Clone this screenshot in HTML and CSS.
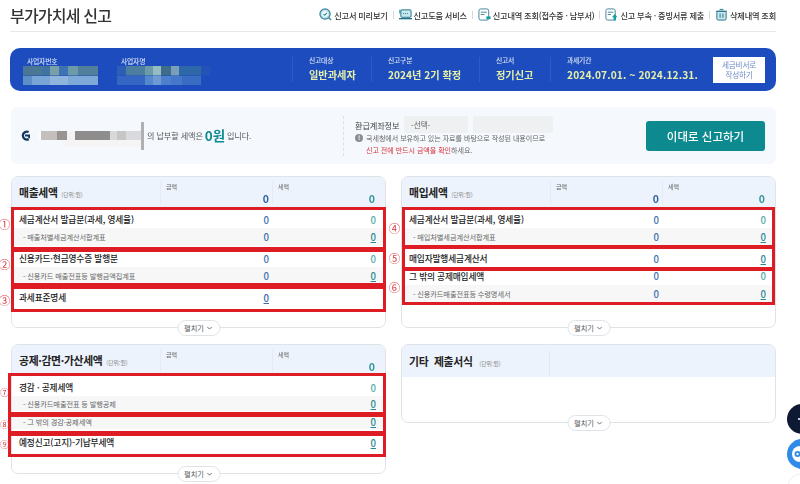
FILE: index.html
```html
<!DOCTYPE html>
<html lang="ko">
<head>
<meta charset="utf-8">
<title>부가가치세 신고</title>
<link rel="stylesheet" href="styles.css">
</head>
<body>
<div class="page">
  <header class="top">
    <h1>부가가치세 신고</h1>
    <nav class="links">
      <a><svg class="ico" viewBox="0 0 14 14"><circle cx="6.5" cy="6.5" r="5.5" fill="#bfe3ea" stroke="#3a7f9a" stroke-width="1.3"/><circle cx="6.5" cy="6.5" r="3" fill="#fff"/><path d="M4.8 6.5l1.4 1.4 2.2-2.6" fill="none" stroke="#0f8a92" stroke-width="1.1"/><path d="M10.5 10.5l2.5 2.5" stroke="#3a7f9a" stroke-width="1.4"/></svg>신고서 미리보기</a>
      <i></i>
      <a><svg class="ico" viewBox="0 0 14 14"><rect x="2" y="2" width="11" height="8" rx="1" fill="#c9e8ee" stroke="#1d6e86"/><path d="M4.5 6h6" stroke="#1d6e86" stroke-dasharray="1 1"/><path d="M0 11.5h14" stroke="#1d6e86" stroke-width="1.4"/><path d="M1 2v4" stroke="#12a0a6" stroke-width="1.4"/></svg>신고도움 서비스</a>
      <i></i>
      <a><svg class="ico" viewBox="0 0 14 14"><rect x="1" y="1" width="10.5" height="12" rx="2" fill="#fff" stroke="#3d7f95"/><path d="M3 4.5h6.5M3 7h4" stroke="#3d7f95"/><path d="M9 9h4.5v3l-4.5 0z" fill="#12a0a6"/></svg>신고내역 조회(접수증 · 납부서)</a>
      <i></i>
      <a><svg class="ico" viewBox="0 0 14 14"><rect x="1" y="1" width="10" height="12" rx="2" fill="#fff" stroke="#3d7f95"/><path d="M3 4.5h6M3 7h3.5" stroke="#3d7f95"/><path d="M10.5 6.5l3 3.5h-1.7v3.5H9.2V10H7.5z" fill="#12a0a6"/></svg>신고 부속 · 증빙서류 제출</a>
      <i></i>
      <a><svg class="ico" viewBox="0 0 14 14"><rect x="2" y="3.5" width="10" height="9.5" rx="1.5" fill="#c9e8ee" stroke="#1d6e86"/><path d="M1 3.5h12M5 1.5h4M5.5 6v4.5M8.5 6v4.5" stroke="#1d6e86"/></svg>삭제내역 조회</a>
    </nav>
  </header>

  <section class="banner">
    <div class="who">
      <div class="who-col w-num"><span class="lab">사업자번호</span><div class="mosaic mo-num"></div></div>
      <div class="who-col"><span class="lab">사업자명</span><div class="mosaic mo-name"></div></div>
    </div>
    <div class="fact f1"><span class="lab">신고대상</span><b>일반과세자</b></div>
    <div class="fact f2"><span class="lab">신고구분</span><b>2024년 2기 확정</b></div>
    <div class="fact f3"><span class="lab">신고서</span><b>정기신고</b></div>
    <div class="fact f4"><span class="lab">과세기간</span><b>2024.07.01. ~ 2024.12.31.</b></div>
    <button class="secretary">세금비서로<br>작성하기</button>
  </section>

  <section class="summary">
    <div class="pay">
      <svg class="logo" viewBox="0 0 10 12"><path d="M8.5 2.2A4.4 4.4 0 1 0 8.5 10" fill="none" stroke="#12365f" stroke-width="2.6"/><path d="M4.5 6H9v3" fill="none" stroke="#12365f" stroke-width="2"/></svg>
      <div class="mosaic mo-pay"></div>
      <p>의 납부할 세액은 <strong>0원</strong> 입니다.</p>
    </div>
    <div class="refund">
      <div class="refund-top">
        <span class="refund-lab">환급계좌정보</span>
        <span class="field f-select">-선택-</span>
        <span class="field f-input"></span>
      </div>
      <p class="note"><span class="bang">!</span>국세청에서 보유하고 있는 자료를 바탕으로 작성된 내용이므로</p>
      <p class="note note2"><em>신고 전에 반드시 금액을 확인</em>하세요.</p>
    </div>
    <button class="submit">이대로 신고하기</button>
  </section>

  <main class="cards">
    <article class="card c-a">
      <div class="head">
        <h2>매출세액 <small>(단위:원)</small></h2>
        <div class="hc"><span>금액</span><b class="blue">0</b></div>
        <div class="hc hc2"><span>세액</span><b class="teal">0</b></div>
      </div>
      <div class="row r-top"><h3>세금계산서 발급분(과세, 영세율)</h3><b class="blue">0</b><b class="teal">0</b></div>
      <div class="row sub"><span>- 매출처별세금계산서합계표</span><b class="blue">0</b><u class="teal">0</u></div>
      <div class="row r-gap"><h3>신용카드·현금영수증 발행분</h3><b class="blue">0</b><b class="teal">0</b></div>
      <div class="row sub"><span>- 신용카드 매출전표등 발행금액집계표</span><b class="blue">0</b><u class="teal">0</u></div>
      <div class="row r-a5"><h3>과세표준명세</h3><u class="blue">0</u><b></b></div>
      <button class="toggle">펼치기 <svg viewBox="0 0 8 5"><path d="M1 1l3 3 3-3" fill="none" stroke="#555" stroke-width="1.1"/></svg></button>
      <div class="mark m1"></div><div class="mark m2"></div><div class="mark m3"></div>
    </article>

    <article class="card c-b">
      <div class="head">
        <h2>매입세액 <small>(단위:원)</small></h2>
        <div class="hc"><span>금액</span><b class="blue">0</b></div>
        <div class="hc hc2"><span>세액</span><b class="teal">0</b></div>
      </div>
      <div class="row r-top"><h3>세금계산서 발급분(과세, 영세율)</h3><b class="blue">0</b><b class="teal">0</b></div>
      <div class="row sub"><span>- 매입처별세금계산서합계표</span><b class="blue">0</b><u class="teal">0</u></div>
      <div class="row r-gap"><h3>매입자발행세금계산서</h3><b class="blue">0</b><u class="teal">0</u></div>
      <div class="row"><h3>그 밖의 공제매입세액</h3><b class="blue">0</b><b class="teal">0</b></div>
      <div class="row sub"><span>- 신용카드매출전표등 수령명세서</span><b class="blue">0</b><u class="teal">0</u></div>
      <button class="toggle">펼치기 <svg viewBox="0 0 8 5"><path d="M1 1l3 3 3-3" fill="none" stroke="#555" stroke-width="1.1"/></svg></button>
      <div class="mark m4"></div><div class="mark m5"></div><div class="mark m6"></div>
    </article>

    <article class="card c-c">
      <div class="head head-c">
        <h2>공제·감면·가산세액 <small>(단위:원)</small></h2>
        <div class="hc"><span>금액</span></div>
        <div class="hc hc2"><span>세액</span><b class="teal">0</b></div>
      </div>
      <div class="row r-c1"><h3>경감 · 공제세액</h3><b></b><b class="teal">0</b></div>
      <div class="row sub r-c2"><span>- 신용카드매출전표 등 발행공제</span><b></b><u class="teal">0</u></div>
      <div class="row sub r-c2 r-c3"><span>- 그 밖의 경감·공제세액</span><b></b><u class="teal">0</u></div>
      <div class="row r-c4"><h3>예정신고(고지)-기납부세액</h3><b></b><u class="teal">0</u></div>
      <button class="toggle">펼치기 <svg viewBox="0 0 8 5"><path d="M1 1l3 3 3-3" fill="none" stroke="#555" stroke-width="1.1"/></svg></button>
      <div class="mark m7"></div><div class="mark m8"></div><div class="mark m9"></div>
    </article>

    <article class="card c-d">
      <div class="head head-d">
        <h2>기타 제출서식 <small>(단위:원)</small></h2>
      </div>
      <button class="toggle">펼치기 <svg viewBox="0 0 8 5"><path d="M1 1l3 3 3-3" fill="none" stroke="#555" stroke-width="1.1"/></svg></button>
    </article>
  </main>

  <span class="num n1">①</span><span class="num n2">②</span><span class="num n3">③</span>
  <span class="num n4">④</span><span class="num n5">⑤</span><span class="num n6">⑥</span>
  <span class="num n7">⑦</span><span class="num n8">⑧</span><span class="num n9">⑨</span>

  <div class="fab fab-dark"><svg viewBox="0 0 30 30"><path d="M11 15h5" stroke="#fff" stroke-width="1.6"/></svg></div>
  <div class="fab fab-blue"><svg viewBox="0 0 30 30"><path d="M5 15a8 8 0 0 1 8-8h6a8 8 0 0 1 8 8v8H13a8 8 0 0 1-8-8z" fill="#fff"/><circle cx="10.5" cy="15" r="3" fill="#2f8ae8"/><circle cx="10.5" cy="15" r="1.2" fill="#fff"/></svg></div>
  <div class="fab fab-pale"></div>
</div>
</body>
</html>
```
FILE: styles.css
```css
* { box-sizing: border-box; }
html, body { margin: 0; padding: 0; }
body {
  background: #fff;
  color: #222;
  font-family: "Noto Sans CJK KR", "Noto Sans", sans-serif;
  overflow: hidden;
}
p, h1, h2, h3 { margin: 0; }
button { font-family: inherit; border: 0; padding: 0; }
.page {
  position: relative;
  width: 800px;
  height: 484px;
  padding: 0 24px 0 10px;
  overflow: hidden;
  filter: blur(.3px);
}

/* header */
.top {
  height: 32px;
  display: flex;
  justify-content: space-between;
  align-items: center;
  border-bottom: 1px solid #e6e8ec;
  padding-bottom: 2px;
}
h1 { font-size: 16px; font-weight: 500; color: #333; letter-spacing: -.8px; line-height: 1; }
.links { display: flex; align-items: center; font-size: 8.2px; font-weight: 500; color: #333; letter-spacing: -.22px; white-space: nowrap; }
.links a { display: flex; align-items: center; gap: 2px; }
.links i { width: 1px; height: 8px; background: #d5d8dd; margin: 0 5px; }
.ico { width: 13px; height: 13px; flex: none; }

/* banner */
.banner {
  margin-top: 16px;
  height: 43px;
  background: #1c4cbd;
  border-radius: 10px;
  display: flex;
  align-items: center;
  color: #d7e3f5;
}
.lab { display: block; font-size: 6.8px; line-height: 9px; color: #d9e3f4; font-weight: 500; letter-spacing: -.2px; }
.who { display: flex; width: 282px; padding: 3px 0 0 13px; }
.who-col { display: flex; flex-direction: column; }
.who-col .lab { padding-left: 4px; }
.w-num { width: 94px; }
.mosaic { background-repeat: no-repeat; }
.mo-num {
  width: 75px; height: 19px;
  background-image:
    linear-gradient(90deg, #4a7894 0 26%, #3f74a0 26% 36%, #77a0a8 36% 48%, #3f74b4 48% 60%, #6d9aa8 60% 74%, #52809c 74%),
    linear-gradient(90deg, #5d8fc6 0 12%, #79a5d6 12% 36%, #8fb5dc 36% 60%, #7ea8d8 60%);
  background-size: 100% 50%, 100% 50%;
  background-position: top, bottom;
}
.mo-name {
  width: 93px; height: 19px;
  background-image:
    linear-gradient(90deg, #2c5eb8 0 10%, #4c7ea0 10% 30%, #6c9aa8 30% 39%, #93bcc4 39% 47%, #3f6c8c 47% 58%, #7a9fb8 58% 67%, #2f68a8 67% 90%, #2453b8 90%),
    linear-gradient(90deg, #3566c4 0 30%, #5588cc 30% 39%, #6f9ad4 39% 47%, #4c80cc 47% 58%, #4578c8 58% 70%, #3a6cc4 70% 90%, #1c4cbd 90%);
  background-size: 100% 50%, 100% 50%;
  background-position: top, bottom;
}
.fact { height: 25px; display: flex; flex-direction: column; justify-content: center; border-left: 1px solid #2c5cc6; padding-left: 16px; }
.fact b { font-size: 10.2px; line-height: 17px; margin-top: 1px; font-weight: 700; color: #e6f0a8; white-space: nowrap; }
.f1 { width: 79px; }
.f2 { width: 108px; }
.f3 { width: 71px; }
.f4 { width: 163px; }
.f4 b { letter-spacing: .12px; }
.secretary {
  width: 52px; height: 26px;
  background: #fff;
  color: #6f8bc6;
  font-size: 7.6px;
  line-height: 10px;
  letter-spacing: -.2px;
}

/* summary */
.summary {
  margin-top: 16px;
  margin-left: 1px;
  width: 765px;
  height: 57px;
  background: #f5f8fc;
  border-radius: 6px;
  display: flex;
  align-items: center;
}
.pay { width: 333px; height: 40px; display: flex; align-items: center; padding-left: 10px; border-right: 1px dashed #dde1e6; }
.logo { width: 9px; height: 11px; flex: none; }
.mo-pay {
  margin-left: 8px; width: 106px; height: 28px; flex: none;
  background-image:
    linear-gradient(90deg, #b0b0b2 0 100%),
    linear-gradient(90deg, #fbfbfc 0 3%, #c3bfbd 3% 18%, #9a9490 18% 27%, #f3f3f4 27% 35%, #8f8d8c 35% 60%, #8e8e8e 60% 68%, #d9d9d9 68% 75%, #c6c6c6 75% 83%, #d9dadd 83% 100%),
    linear-gradient(90deg, #f5f5f6 0 100%);
  background-size: 3px 28px, 100% 9px, 80% 7px;
  background-position: 103px 0, 0 9px, 25px 18px;
}
.pay p { font-size: 8.1px; color: #555; margin-left: 3px; letter-spacing: -.1px; white-space: nowrap; display: flex; align-items: center; gap: 2px; }
.pay strong { font-size: 13.5px; font-weight: 700; color: #0f8a92; line-height: 1; }
.refund { width: 302px; padding: 1px 0 0 11px; }
.refund-top { display: flex; align-items: center; height: 17px; margin-bottom: -1px; }
.refund-lab { font-size: 8.2px; color: #444; width: 49px; letter-spacing: -.15px; }
.field { height: 17px; background: #eef0f2; border-radius: 2px; font-size: 7.6px; color: #666; line-height: 17px; }
.f-select { width: 64px; padding-left: 7px; }
.f-input { width: 80px; margin-left: 5px; }
.note { font-size: 7.05px; color: #666; line-height: 12px; display: flex; align-items: center; white-space: nowrap; letter-spacing: -.04px; }
.note2 { padding-left: 11px; display: block; }
.note em { font-style: normal; color: #d8343a; }
.bang { width: 8px; height: 8px; background: #8b8f94; color: #fff; border-radius: 50%; font-size: 6px; line-height: 8px; text-align: center; margin-right: 3px; font-weight: 700; flex: none; }
.submit {
  width: 119px; height: 30px;
  background: #0d8a8f; color: #fff; border-radius: 3px;
  font-size: 11.5px; font-weight: 500;
}

/* cards */
.cards {
  margin-top: 12px;
  margin-left: 1px;
  display: grid;
  grid-template-columns: 375px 375px;
  column-gap: 15px;
  row-gap: 16px;
  align-items: start;
}
.card { position: relative; background: #fff; border: 1px solid #dfe3e8; border-radius: 7px; }
.c-a, .c-b { height: 152px; }
.c-c { height: 130px; }
.c-d { height: 79px; }
.head {
  height: 31px;
  background: #edf3fc;
  border-radius: 6px 6px 0 0;
  display: grid;
  grid-template-columns: 148px 112px 1fr;
  margin-bottom: 2px;
}
.head-c { height: 29px; margin-bottom: 1px; }
.head-d { height: 32px; grid-template-columns: 148px 1fr; }
.head-d h2 { border-right: 1px solid #e1e8f3; height: 24px; margin-top: 6px; line-height: 21px; word-spacing: 3px; }
h2 { font-size: 10.8px; font-weight: 700; color: #222; padding-left: 7px; line-height: 31px; letter-spacing: -.3px; white-space: nowrap; }
h2 small { font-size: 5.8px; font-weight: 400; color: #888; letter-spacing: 0; margin-left: 1px; word-spacing: 0; }
.hc { position: relative; border-left: 1px solid #e4ebf6; font-size: 6px; color: #666; padding-left: 5px; line-height: 12px; height: 24px; margin-top: 4px; }
.hc b { position: absolute; right: 3px; top: 11px; font-size: 10.5px; font-weight: 700; line-height: 14px; }
.hc .blue { color: #2f5f9e; }
.hc2 b { right: 10px; }
.row {
  display: grid;
  grid-template-columns: 1fr 107px 107px;
  align-items: center;
  height: 18px;
  padding: 0 9px 0 7px;
  font-size: 9.6px;
  text-align: right;
}
.row > :first-child { text-align: left; }
h3 { font-size: 8.7px; font-weight: 500; color: #222; letter-spacing: -.15px; white-space: nowrap; }
.row b, .row u { font-size: 9.6px; font-weight: 500; }
.sub { background: #f7f7f7; }
.sub span { font-size: 7.2px; color: #666; padding-left: 4px; letter-spacing: -.1px; white-space: nowrap; }
.blue { color: #3d72b0; }
.teal { color: #55aea8; }
.hc .teal { color: #2f9599; }
.row u.teal { color: #2a8a94; }
.row u.blue { color: #3a6aa8; }
.r-top { padding-top: 1px; }
.r-gap { margin-top: 3px; padding-top: 1px; }
.r-a5 { margin-top: 2px; height: 21px; }
.r-c1 { margin-top: 1px; height: 21px; padding-top: 4px; }
.r-c2 { height: 15px; }
.r-c3 { margin-top: 3px; }
.r-c4 { margin-top: 3px; height: 20px; padding-top: 1px; }
.toggle {
  position: absolute;
  left: 50%;
  bottom: -9px;
  transform: translateX(-50%);
  width: 43px; height: 16px;
  background: #fff;
  border: 1px solid #dfe3e8;
  border-radius: 8px;
  font-size: 7.2px;
  color: #555;
  display: flex; align-items: center; justify-content: center; gap: 3px;
}
.toggle svg { width: 6px; height: 4px; }

/* red annotation boxes */
.mark { position: absolute; border: 3px solid #dd1c24; pointer-events: none; }
.m1 { left: -1px; right: -1px; top: 30px; height: 43px; }
.m2 { left: -1px; right: -1px; top: 72px; height: 37px; }
.m3 { left: -1px; right: -1px; top: 109px; height: 26px; }
.m4 { left: 0; right: 0; top: 30px; height: 41px; }
.m5 { left: 0; right: 0; top: 69px; height: 24px; }
.m6 { left: 0; right: 0; top: 91px; height: 37px; }
.m7 { left: -4px; right: -1px; top: 28px; height: 42px; }
.m8 { left: -4px; right: -1px; top: 69px; height: 20px; }
.m9 { left: -4px; right: -1px; top: 88px; height: 24px; }

.num { position: absolute; font-size: 11.5px; line-height: 13px; color: #d9434a; width: 13px; text-align: center; }
.n1 { left: -2px; top: 218px; }
.n2 { left: -2px; top: 258px; }
.n3 { left: -2px; top: 294px; }
.n4 { left: 388px; top: 222px; }
.n5 { left: 388px; top: 252px; }
.n6 { left: 388px; top: 281px; }
.n7, .n8, .n9 { font-size: 9px; width: 9px; left: 0; }
.n7 { top: 386px; }
.n8 { top: 418px; }
.n9 { top: 438px; }

/* floating buttons */
.fab { position: absolute; left: 787px; width: 30px; height: 30px; border-radius: 50%; }
.fab svg { width: 30px; height: 30px; display: block; }
.fab-dark { top: 404px; background: #0e1a33; }
.fab-blue { top: 439px; background: #2f8ae8; }
.fab-pale { top: 473px; background: #fff; border: 1px solid #eee; }
```
